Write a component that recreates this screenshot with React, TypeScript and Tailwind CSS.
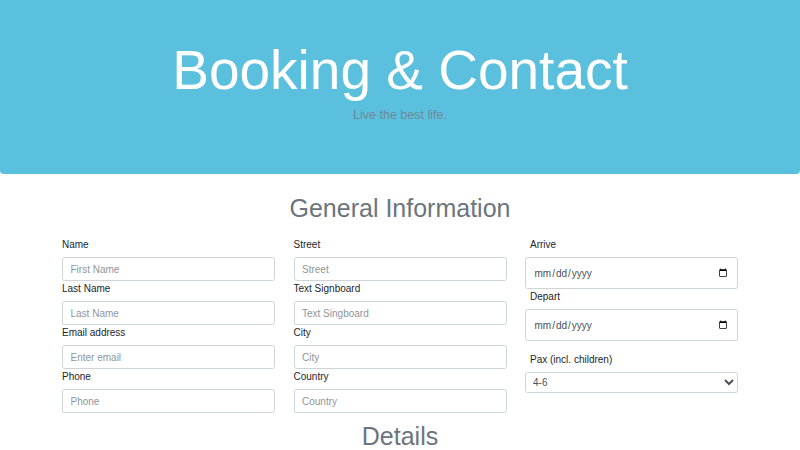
const left = [
  { label: "Name", placeholder: "First Name", type: "text" },
  { label: "Last Name", placeholder: "Last Name", type: "text" },
  { label: "Email address", placeholder: "Enter email", type: "email" },
  { label: "Phone", placeholder: "Phone", type: "tel" },
]

const middle = [
  { label: "Street", placeholder: "Street" },
  { label: "Text Signboard", placeholder: "Text Singboard" },
  { label: "City", placeholder: "City" },
  { label: "Country", placeholder: "Country" },
]

const inputCls =
  "block w-full h-[24px] rounded-[2.5px] border border-[#ced4da] bg-white px-[7.5px] text-[10px] text-[#495057] placeholder:text-[#8f959a] outline-none"

const dateCls =
  "block h-[32px] w-full rounded-[2.5px] border border-[#ced4da] bg-white px-[7.5px] text-[10px] text-[#495057] outline-none"

function Field({ label, placeholder, type = "text" }: { label: string; placeholder: string; type?: string }) {
  return (
    <div>
      <label className="mb-[5px] block text-[10px] leading-[15px] text-[#212529]">{label}</label>
      <input type={type} placeholder={placeholder} className={inputCls} />
    </div>
  )
}

export default function App() {
  return (
    <div className="min-h-[450px] bg-white" style={{ fontFamily: '"Liberation Sans", Arial, sans-serif' }}>
      <header className="flex h-[174px] flex-col items-center rounded-b-[4px] bg-[#5bc0de] pt-[37px]">
        <h1 className="text-[55px] leading-[66px] text-white">Booking &amp; Contact</h1>
        <p className="mt-[3px] text-[12.5px] leading-[18.75px] text-[#6c8a96]">Live the best life.</p>
      </header>

      <main className="mx-auto w-[676px]">
        <h2 className="mt-[19px] mb-[14px] text-center text-[25px] leading-[30px] text-[#6c757d]">General Information</h2>

        <div className="grid grid-cols-3 gap-x-[18.5px]">
          <div className="flex flex-col">
            {left.map((f) => (
              <Field key={f.label} {...f} />
            ))}
          </div>
          <div className="flex flex-col">
            {middle.map((f) => (
              <Field key={f.label} {...f} />
            ))}
          </div>
          <div className="flex flex-col">
            <label className="mb-[5px] block pl-[5px] text-[10px] leading-[15px] text-[#212529]">Arrive</label>
            <input type="date" className={dateCls} />
            <label className="mb-[5px] block pl-[5px] text-[10px] leading-[15px] text-[#212529]">Depart</label>
            <input type="date" className={dateCls} />
            <label className="mt-[11px] mb-[5px] block pl-[5px] text-[10px] leading-[15px] text-[#212529]">Pax (incl. children)</label>
            <select defaultValue="4-6" className="block h-[21px] w-full rounded-[2.5px] border border-[#ced4da] bg-white px-[3px] text-[10px] text-[#495057] outline-none">
              <option>1-3</option>
              <option>4-6</option>
              <option>7-10</option>
            </select>
          </div>
        </div>

        <h2 className="mt-[8px] text-center text-[25px] leading-[30px] text-[#6c757d]">Details</h2>
      </main>
    </div>
  )
}
